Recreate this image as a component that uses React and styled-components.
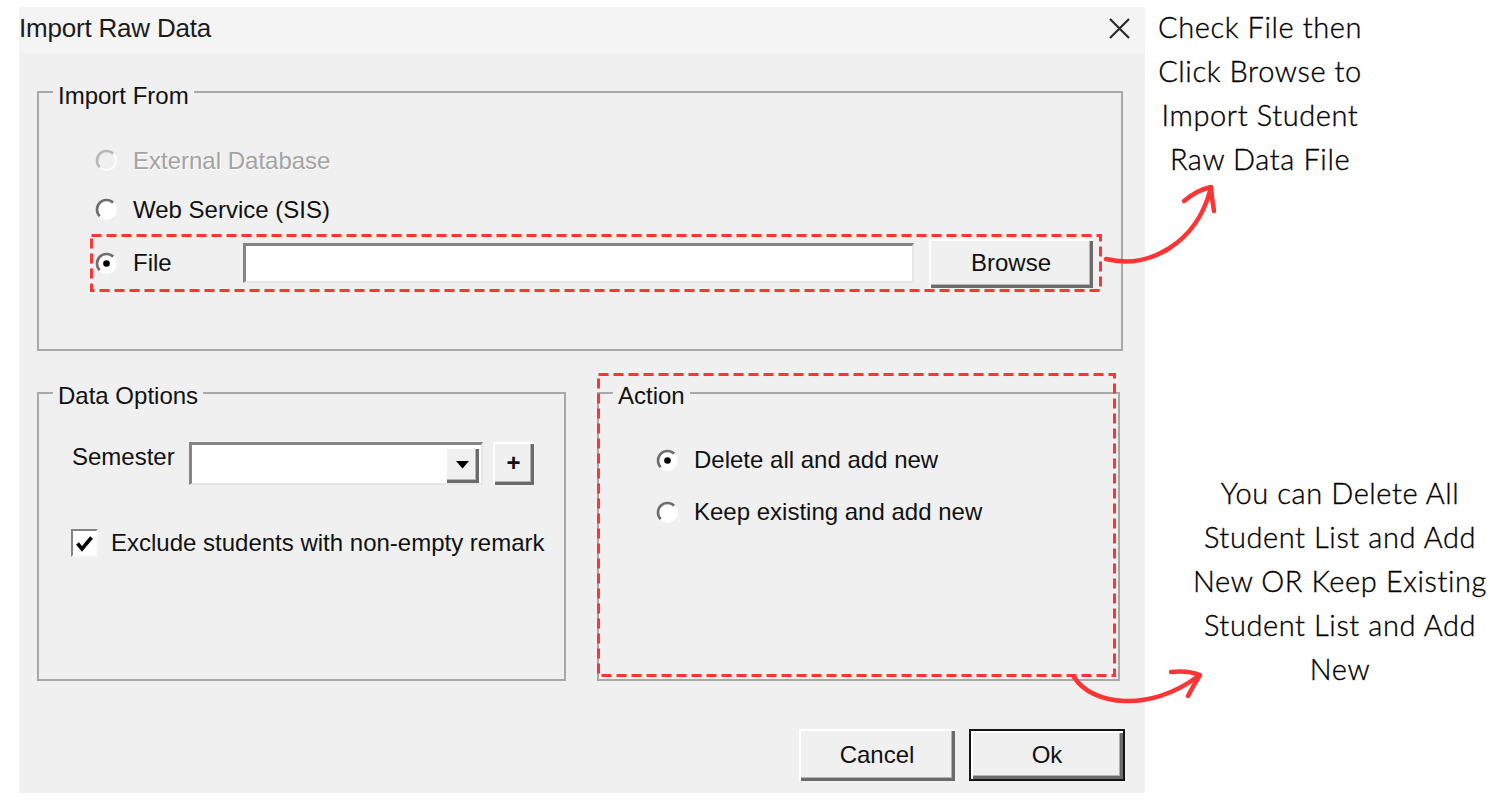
import React from "react";
import styled, { createGlobalStyle } from "styled-components";

const GlobalStyle = createGlobalStyle`
  html, body { margin: 0; padding: 0; background: #ffffff; }
  body { font-family: "Liberation Sans", Arial, sans-serif; }
  *, *::before, *::after { box-sizing: border-box; }
`;

const Page = styled.div`
  position: relative;
  width: 1489px;
  height: 810px;
  display: flex;
  align-items: flex-start;
  padding: 7px 0 0 19px;
  overflow: hidden;
`;

const Dialog = styled.div`
  flex: none;
  width: 1126px;
  height: 786px;
  background: #f0f0f0;
  display: flex;
  flex-direction: column;
  font-family: "Liberation Sans", Arial, sans-serif;
  font-size: 24px;
  color: #111;
`;

const TitleBar = styled.div`
  flex: none;
  height: 46px;
  background: #f4f4f4;
  display: flex;
  align-items: center;
  justify-content: space-between;
  padding: 0 14px 0 0;
`;

const Title = styled.span`
  font-size: 26px;
  color: #1b1b1b;
  letter-spacing: -0.2px;
  margin-top: -3px;
`;

const CloseIcon = styled.svg`
  display: block;
  width: 23px;
  height: 21px;
  margin-top: -3px;
`;

const Body = styled.div`
  display: flex;
  flex-direction: column;
  padding: 21px 0 12px 18px;
`;

const GroupBox = styled.fieldset`
  margin: 0;
  padding: 0;
  min-width: 0;
  width: ${(p) => p.$w}px;
  height: ${(p) => p.$h}px;
  border: 2px solid #a8a8a8;
  display: flex;
  flex-direction: column;
`;

const Legend = styled.legend`
  margin-left: 14px;
  padding: ${(p) => p.$drop || 8}px 5px 0;
  line-height: 28px;
  font-size: 24px;
  color: #111;
`;

const GroupContent = styled.div`
  display: flex;
  flex-direction: column;
  padding: ${(p) => p.$pad};
`;

const OptionRow = styled.label`
  display: flex;
  align-items: center;
  height: ${(p) => p.$h || 49}px;
  padding-left: ${(p) => p.$indent || 0}px;
  gap: 15px;
  color: ${(p) => (p.$disabled ? "#a3a3a3" : "#111")};
  text-shadow: ${(p) => (p.$disabled ? "1px 1px 0 #ffffff" : "none")};
  white-space: nowrap;
`;

const HighlightRow = styled.div`
  position: relative;
  display: flex;
  align-items: center;
  width: ${(p) => p.$w}px;
  height: ${(p) => p.$h}px;
  padding: 0 9px 0 5px;
`;

const FrameSvg = styled.svg`
  position: absolute;
  left: ${(p) => p.$x || 0}px;
  top: ${(p) => p.$y || 0}px;
  pointer-events: none;
  overflow: visible;
`;

const FileLabel = styled.span`
  flex: none;
  width: 110px;
  margin-left: 15px;
`;

const TextField = styled.div`
  flex: 1;
  height: 40px;
  background: #fff;
  border-style: solid;
  border-width: 3px 2px 2px 3px;
  border-color: #858585 #e6e6e6 #e6e6e6 #858585;
`;

const Button = styled.button`
  flex: none;
  width: ${(p) => p.$w}px;
  height: ${(p) => p.$h}px;
  margin-left: ${(p) => p.$ml || 0}px;
  padding: 0;
  background: #f0f0f0;
  font-family: "Liberation Sans", Arial, sans-serif;
  font-size: 24px;
  color: #111;
  border: ${(p) => (p.$primary ? "2px solid #141414" : "none")};
  box-shadow: inset 2px 2px 0 #ffffff, inset -3px -3px 0 #6b6b6b,
    inset -4px -4px 0 #b4b4b4;
  display: flex;
  align-items: center;
  justify-content: center;
`;

const BottomRow = styled.div`
  display: flex;
  gap: 31px;
  margin-top: 25px;
`;

const ActionArea = styled.div`
  position: relative;
`;

const FieldRow = styled.div`
  display: flex;
  align-items: flex-start;
`;

const FieldLabel = styled.span`
  flex: none;
  width: 117px;
  line-height: 28px;
  margin-top: 1px;
`;

const Combo = styled.div`
  flex: none;
  width: 294px;
  height: 43px;
  background: #fff;
  border-style: solid;
  border-width: 3px 2px 2px 3px;
  border-color: #858585 #e6e6e6 #e6e6e6 #858585;
  display: flex;
  justify-content: flex-end;
  padding: 2px 2px 0 0;
`;

const DropButton = styled.div`
  width: 34px;
  height: 36px;
  background: #f0f0f0;
  box-shadow: inset 2px 2px 0 #ffffff, inset -3px -3px 0 #6b6b6b,
    inset -4px -4px 0 #b4b4b4;
  display: flex;
  align-items: center;
  justify-content: center;
`;

const PlusText = styled.span`
  font-weight: bold;
  font-size: 24px;
  margin-top: -2px;
`;

const CheckRow = styled.label`
  display: flex;
  align-items: center;
  gap: 13px;
  height: 30px;
  margin-top: 43px;
  margin-left: -1px;
  white-space: nowrap;
`;

const CheckBox = styled.span`
  flex: none;
  width: 27px;
  height: 28px;
  background: #fff;
  border-style: solid;
  border-width: 2px;
  border-color: #848484 #f8f8f8 #f8f8f8 #848484;
  display: flex;
  align-items: center;
  justify-content: center;
`;

const Footer = styled.div`
  display: flex;
  justify-content: flex-end;
  gap: 14px;
  margin-top: 48px;
  padding-right: 20px;
`;

const Notes = styled.div`
  flex: none;
  width: 344px;
  display: flex;
  flex-direction: column;
  font-family: Lato, "Noto Sans", sans-serif;
  font-weight: 300;
  font-size: 29px;
  line-height: 44px;
  color: #000;
  text-align: center;
  white-space: nowrap;
  -webkit-text-stroke: 0.35px #000;
`;

const Note = styled.p`
  margin: ${(p) => p.$top}px 0 0 ${(p) => p.$left}px;
  width: ${(p) => p.$w}px;
  letter-spacing: 0.6px;
`;

const ArrowLayer = styled.svg`
  position: absolute;
  left: 0;
  top: 0;
  width: 1489px;
  height: 810px;
  pointer-events: none;
`;

function RadioMark({ checked, disabled }) {
  return (
    <svg width="23" height="23" viewBox="0 0 23 23" style={{ flex: "none" }}>
      <circle cx="11.5" cy="11.5" r="9.5" fill={disabled ? "#f0f0f0" : "#ffffff"} />
      <path
        d="M4.78 18.22 A9.5 9.5 0 0 1 18.22 4.78"
        fill="none"
        stroke={disabled ? "#b8b8b8" : "#6e6e6e"}
        strokeWidth="2.6"
      />
      <path
        d="M18.22 4.78 A9.5 9.5 0 0 1 4.78 18.22"
        fill="none"
        stroke="#fdfdfd"
        strokeWidth="2"
      />
      {checked && <circle cx="11.5" cy="11.5" r="3.3" fill="#000" />}
    </svg>
  );
}

function DashedFrame({ w, h, x, y }) {
  return (
    <FrameSvg width={w} height={h} $x={x} $y={y}>
      <rect
        x="1.5"
        y="1.5"
        width={w - 3}
        height={h - 3}
        fill="none"
        stroke="#ff3434"
        strokeWidth="3"
        strokeDasharray="10 5"
      />
    </FrameSvg>
  );
}

export default function App() {
  return (
    <>
      <GlobalStyle />
      <Page>
        <Dialog>
          <TitleBar>
            <Title>Import Raw Data</Title>
            <CloseIcon viewBox="0 0 23 21">
              <path d="M2 1 L21 20 M21 1 L2 20" stroke="#2a2a2a" strokeWidth="2.2" />
            </CloseIcon>
          </TitleBar>
          <Body>
            <GroupBox $w={1086} $h={277}>
              <Legend>Import From</Legend>
              <GroupContent $pad="26px 0 0 51px">
                <OptionRow $indent={5} $disabled>
                  <RadioMark disabled />
                  External Database
                </OptionRow>
                <OptionRow $indent={5}>
                  <RadioMark />
                  Web Service (SIS)
                </OptionRow>
                <HighlightRow $w={1012} $h={58}>
                  <DashedFrame w={1012} h={58} />
                  <RadioMark checked />
                  <FileLabel>File</FileLabel>
                  <TextField />
                  <Button $w={164} $h={49} $ml={15}>Browse</Button>
                </HighlightRow>
              </GroupContent>
            </GroupBox>
            <BottomRow>
              <GroupBox $w={529} $h={305}>
                <Legend $drop={6}>Data Options</Legend>
                <GroupContent $pad="32px 0 0 33px">
                  <FieldRow>
                    <FieldLabel>Semester</FieldLabel>
                    <Combo>
                      <DropButton>
                        <svg width="13" height="8" viewBox="0 0 13 8">
                          <polygon points="0,0 13,0 6.5,7.5" fill="#000" />
                        </svg>
                      </DropButton>
                    </Combo>
                    <Button $w={41} $h={43} $ml={10}>
                      <PlusText>+</PlusText>
                    </Button>
                  </FieldRow>
                  <CheckRow>
                    <CheckBox>
                      <svg width="19" height="19" viewBox="0 0 19 19">
                        <path
                          d="M2.5 9.5 L7 15 L16.5 3.5"
                          fill="none"
                          stroke="#000"
                          strokeWidth="3.6"
                        />
                      </svg>
                    </CheckBox>
                    Exclude students with non-empty remark
                  </CheckRow>
                </GroupContent>
              </GroupBox>
              <ActionArea>
                <GroupBox $w={523} $h={305}>
                  <Legend $drop={6}>Action</Legend>
                  <GroupContent $pad="24px 0 0 57px">
                    <OptionRow $h={52}>
                      <RadioMark checked />
                      Delete all and add new
                    </OptionRow>
                    <OptionRow $h={52}>
                      <RadioMark />
                      Keep existing and add new
                    </OptionRow>
                  </GroupContent>
                </GroupBox>
                <DashedFrame w={519} h={304} x={0} y={-3} />
              </ActionArea>
            </BottomRow>
            <Footer>
              <Button $w={156} $h={52}>Cancel</Button>
              <Button $w={156} $h={52} $primary>Ok</Button>
            </Footer>
          </Body>
        </Dialog>
        <Notes>
          <Note $top={-2} $left={0} $w={230}>
            Check File then
            <br />
            Click Browse to
            <br />
            Import Student
            <br />
            Raw Data File
          </Note>
          <Note $top={290} $left={45} $w={300}>
            You can Delete All
            <br />
            Student List and Add
            <br />
            New OR Keep Existing
            <br />
            Student List and Add
            <br />
            New
          </Note>
        </Notes>
        <ArrowLayer viewBox="0 0 1489 810">
          <g fill="none" stroke="#ff3434" strokeWidth="4.5" strokeLinecap="round" strokeLinejoin="round">
            <path d="M1106 259 C1150 270 1196 242 1210 191" />
            <path d="M1184 201 Q1197 190 1211 187 Q1212 200 1214 211" />
            <path d="M1074 677 C1092 706 1150 712 1197 677" />
            <path d="M1171 672 Q1187 670 1200 675 Q1193 686 1188 696" />
          </g>
        </ArrowLayer>
      </Page>
    </>
  );
}
